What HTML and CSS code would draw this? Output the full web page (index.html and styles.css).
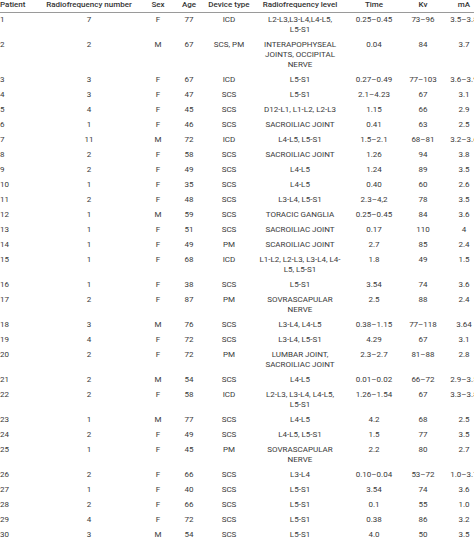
FILE: index.html
```html
<!DOCTYPE html>
<html>
<head>
<meta charset="utf-8">
<link rel="stylesheet" href="styles.css">
</head>
<body>
<div class="table">
  <div class="row head">
    <div class="c pat">Patient</div><div class="c">Radiofrequency number</div><div class="c">Sex</div><div class="c">Age</div><div class="c">Device type</div><div class="c">Radiofrequency level</div><div class="c">Time</div><div class="c">Kv</div><div class="c">mA</div>
  </div>
  <div class="row"><div class="c pat">1</div><div class="c">7</div><div class="c">F</div><div class="c">77</div><div class="c">ICD</div><div class="c">L2-L3,L3-L4,L4-L5,<br>L5-S1</div><div class="c">0.25–0.45</div><div class="c">73–96</div><div class="c">3.5–3.8</div></div>
  <div class="row"><div class="c pat">2</div><div class="c">2</div><div class="c">M</div><div class="c">67</div><div class="c">SCS, PM</div><div class="c">INTERAPOPHYSEAL<br>JOINTS, OCCIPITAL<br>NERVE</div><div class="c">0.04</div><div class="c">84</div><div class="c">3.7</div></div>
  <div class="row"><div class="c pat">3</div><div class="c">3</div><div class="c">F</div><div class="c">67</div><div class="c">ICD</div><div class="c">L5-S1</div><div class="c">0.27–0.49</div><div class="c">77–103</div><div class="c">3.6–3.9</div></div>
  <div class="row"><div class="c pat">4</div><div class="c">3</div><div class="c">F</div><div class="c">47</div><div class="c">SCS</div><div class="c">L5-S1</div><div class="c">2.1–4.23</div><div class="c">67</div><div class="c">3.1</div></div>
  <div class="row"><div class="c pat">5</div><div class="c">4</div><div class="c">F</div><div class="c">45</div><div class="c">SCS</div><div class="c">D12-L1, L1-L2, L2-L3</div><div class="c">1.15</div><div class="c">66</div><div class="c">2.9</div></div>
  <div class="row"><div class="c pat">6</div><div class="c">1</div><div class="c">F</div><div class="c">46</div><div class="c">SCS</div><div class="c">SACROILIAC JOINT</div><div class="c">0.41</div><div class="c">63</div><div class="c">2.5</div></div>
  <div class="row"><div class="c pat">7</div><div class="c">11</div><div class="c">M</div><div class="c">72</div><div class="c">ICD</div><div class="c">L4-L5, L5-S1</div><div class="c">1.5–2.1</div><div class="c">68–81</div><div class="c">3.2–3.6</div></div>
  <div class="row"><div class="c pat">8</div><div class="c">2</div><div class="c">F</div><div class="c">58</div><div class="c">SCS</div><div class="c">SACROILIAC JOINT</div><div class="c">1.26</div><div class="c">94</div><div class="c">3.8</div></div>
  <div class="row"><div class="c pat">9</div><div class="c">2</div><div class="c">F</div><div class="c">49</div><div class="c">SCS</div><div class="c">L4-L5</div><div class="c">1.24</div><div class="c">89</div><div class="c">3.5</div></div>
  <div class="row"><div class="c pat">10</div><div class="c">1</div><div class="c">F</div><div class="c">35</div><div class="c">SCS</div><div class="c">L4-L5</div><div class="c">0.40</div><div class="c">60</div><div class="c">2.6</div></div>
  <div class="row"><div class="c pat">11</div><div class="c">2</div><div class="c">F</div><div class="c">48</div><div class="c">SCS</div><div class="c">L3-L4, L5-S1</div><div class="c">2.3–4,2</div><div class="c">78</div><div class="c">3.5</div></div>
  <div class="row"><div class="c pat">12</div><div class="c">1</div><div class="c">M</div><div class="c">59</div><div class="c">SCS</div><div class="c">TORACIC GANGLIA</div><div class="c">0.25–0.45</div><div class="c">84</div><div class="c">3.6</div></div>
  <div class="row"><div class="c pat">13</div><div class="c">1</div><div class="c">F</div><div class="c">51</div><div class="c">SCS</div><div class="c">SACROILIAC JOINT</div><div class="c">0.17</div><div class="c">110</div><div class="c">4</div></div>
  <div class="row"><div class="c pat">14</div><div class="c">1</div><div class="c">F</div><div class="c">49</div><div class="c">PM</div><div class="c">SCAROILIAC JOINT</div><div class="c">2.7</div><div class="c">85</div><div class="c">2.4</div></div>
  <div class="row"><div class="c pat">15</div><div class="c">1</div><div class="c">F</div><div class="c">68</div><div class="c">ICD</div><div class="c">L1-L2, L2-L3, L3-L4, L4-<br>L5, L5-S1</div><div class="c">1.8</div><div class="c">49</div><div class="c">1.5</div></div>
  <div class="row"><div class="c pat">16</div><div class="c">1</div><div class="c">F</div><div class="c">38</div><div class="c">SCS</div><div class="c">L5-S1</div><div class="c">3.54</div><div class="c">74</div><div class="c">3.6</div></div>
  <div class="row"><div class="c pat">17</div><div class="c">2</div><div class="c">F</div><div class="c">87</div><div class="c">PM</div><div class="c">SOVRASCAPULAR<br>NERVE</div><div class="c">2.5</div><div class="c">88</div><div class="c">2.4</div></div>
  <div class="row"><div class="c pat">18</div><div class="c">3</div><div class="c">M</div><div class="c">76</div><div class="c">SCS</div><div class="c">L3-L4, L4-L5</div><div class="c">0.38–1.15</div><div class="c">77–118</div><div class="c">3.64</div></div>
  <div class="row"><div class="c pat">19</div><div class="c">4</div><div class="c">F</div><div class="c">72</div><div class="c">SCS</div><div class="c">L3-L4, L5-S1</div><div class="c">4.29</div><div class="c">67</div><div class="c">3.1</div></div>
  <div class="row"><div class="c pat">20</div><div class="c">2</div><div class="c">F</div><div class="c">72</div><div class="c">PM</div><div class="c">LUMBAR JOINT,<br>SACROILIAC JOINT</div><div class="c">2.3–2.7</div><div class="c">81–88</div><div class="c">2.8</div></div>
  <div class="row"><div class="c pat">21</div><div class="c">2</div><div class="c">M</div><div class="c">54</div><div class="c">SCS</div><div class="c">L4-L5</div><div class="c">0.01–0.02</div><div class="c">66–72</div><div class="c">2.9–3.5</div></div>
  <div class="row"><div class="c pat">22</div><div class="c">2</div><div class="c">F</div><div class="c">58</div><div class="c">ICD</div><div class="c">L2-L3, L3-L4, L4-L5,<br>L5-S1</div><div class="c">1.26–1.54</div><div class="c">67</div><div class="c">3.3–3.8</div></div>
  <div class="row"><div class="c pat">23</div><div class="c">1</div><div class="c">M</div><div class="c">77</div><div class="c">SCS</div><div class="c">L4-L5</div><div class="c">4.2</div><div class="c">68</div><div class="c">2.5</div></div>
  <div class="row"><div class="c pat">24</div><div class="c">2</div><div class="c">F</div><div class="c">49</div><div class="c">SCS</div><div class="c">L4-L5, L5-S1</div><div class="c">1.5</div><div class="c">77</div><div class="c">3.5</div></div>
  <div class="row"><div class="c pat">25</div><div class="c">1</div><div class="c">F</div><div class="c">45</div><div class="c">PM</div><div class="c">SOVRASCAPULAR<br>NERVE</div><div class="c">2.2</div><div class="c">80</div><div class="c">2.7</div></div>
  <div class="row"><div class="c pat">26</div><div class="c">2</div><div class="c">F</div><div class="c">66</div><div class="c">SCS</div><div class="c">L3-L4</div><div class="c">0.10–0.04</div><div class="c">53–72</div><div class="c">1.0–3.7</div></div>
  <div class="row"><div class="c pat">27</div><div class="c">1</div><div class="c">F</div><div class="c">40</div><div class="c">SCS</div><div class="c">L5-S1</div><div class="c">3.54</div><div class="c">74</div><div class="c">3.6</div></div>
  <div class="row"><div class="c pat">28</div><div class="c">2</div><div class="c">F</div><div class="c">66</div><div class="c">SCS</div><div class="c">L5-S1</div><div class="c">0.1</div><div class="c">55</div><div class="c">1.0</div></div>
  <div class="row"><div class="c pat">29</div><div class="c">4</div><div class="c">F</div><div class="c">72</div><div class="c">SCS</div><div class="c">L5-S1</div><div class="c">0.38</div><div class="c">86</div><div class="c">3.2</div></div>
  <div class="row"><div class="c pat">30</div><div class="c">3</div><div class="c">M</div><div class="c">54</div><div class="c">SCS</div><div class="c">L5-S1</div><div class="c">4.0</div><div class="c">50</div><div class="c">3.5</div></div>
</div>
</body>
</html>
```
FILE: styles.css
```css
html, body {
  margin: 0;
  padding: 0;
  background: #ffffff;
  overflow: hidden;
}
body {
  width: 474px;
  height: 543px;
  font-family: Roboto, "Liberation Sans", sans-serif;
  font-size: 8px;
  color: #3a3a3a;
}
.table {
  width: 490px;
}
.row {
  display: grid;
  grid-template-columns: 42px 94px 44px 18px 62px 80px 68px 30px 52px;
}
.c {
  padding: 2px 0 3px;
  line-height: 10px;
  text-align: center;
  white-space: nowrap;
  justify-self: center;
}
.c.pat {
  justify-self: start;
  text-align: left;
}
.head {
  border-bottom: 1px solid #9a9a9a;
  font-weight: 500;
  color: #333;
}
.head .c {
  padding: 0 0 2px;
}
```
